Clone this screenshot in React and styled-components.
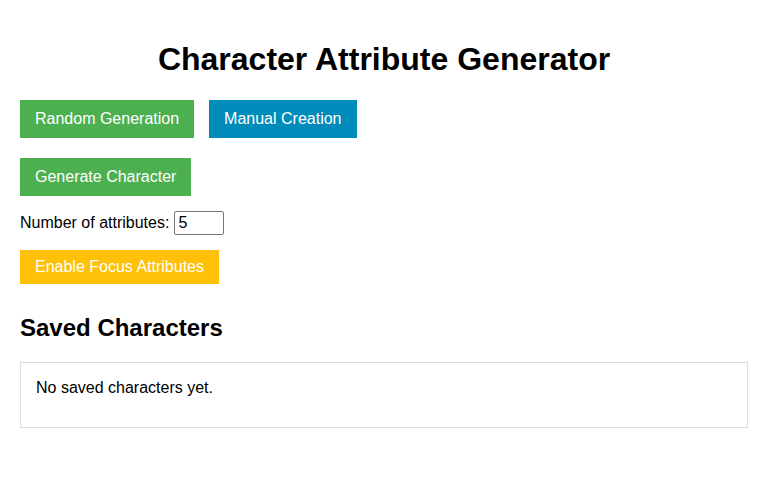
import React from "react";
import styled, { createGlobalStyle } from "styled-components";

const Global = createGlobalStyle`
  html, body { margin: 0; padding: 0; background: #fff; }
  body { font-family: "Liberation Sans", Arial, sans-serif; color: #000; }
`;

const Page = styled.div`
  padding: 20px;
`;

const Title = styled.h1`
  font-size: 32px;
  font-weight: bold;
  text-align: center;
  margin: 21.44px 0;
  line-height: 37px;
`;

const Row = styled.div`
  display: flex;
  align-items: center;
  gap: ${(p) => p.$gap || 0}px;
  margin-bottom: ${(p) => p.$mb || 0}px;
`;

const Button = styled.button`
  background: ${(p) => p.$bg};
  color: #fff;
  border: none;
  font-family: "Liberation Sans", Arial, sans-serif;
  font-size: 16px;
  line-height: 18px;
  padding: ${(p) => (p.$compact ? "8px 15px" : "10px 15px")};
  cursor: pointer;
`;

const Label = styled.label`
  font-size: 16px;
  display: flex;
  align-items: center;
  gap: 5px;
`;

const NumberInput = styled.input`
  width: 50px;
  height: 24px;
  box-sizing: border-box;
  border: 1px solid #767676;
  border-radius: 2px;
  font-family: "Liberation Sans", Arial, sans-serif;
  font-size: 16px;
  padding: 1px 3px;
`;

const SubTitle = styled.h2`
  font-size: 24px;
  font-weight: bold;
  margin: 30px 0 20px;
  line-height: 28px;
`;

const SavedBox = styled.div`
  border: 1px solid #ddd;
  padding: 16px 15px 15px;
  box-sizing: border-box;
  height: 66px;
`;

const Empty = styled.p`
  margin: 0;
  font-size: 16px;
  line-height: 18px;
`;

export default function App() {
  return (
    <>
      <Global />
      <Page>
        <Title>Character Attribute Generator</Title>
        <Row $gap={15} $mb={20}>
          <Button $bg="#4CAF50">Random Generation</Button>
          <Button $bg="#008CBA">Manual Creation</Button>
        </Row>
        <Row $mb={15}>
          <Button $bg="#4CAF50">Generate Character</Button>
        </Row>
        <Row $mb={15}>
          <Label>
            Number of attributes:
            <NumberInput type="text" defaultValue="5" />
          </Label>
        </Row>
        <Row>
          <Button $bg="#FFC107" $compact>Enable Focus Attributes</Button>
        </Row>
        <SubTitle>Saved Characters</SubTitle>
        <SavedBox>
          <Empty>No saved characters yet.</Empty>
        </SavedBox>
      </Page>
    </>
  );
}
